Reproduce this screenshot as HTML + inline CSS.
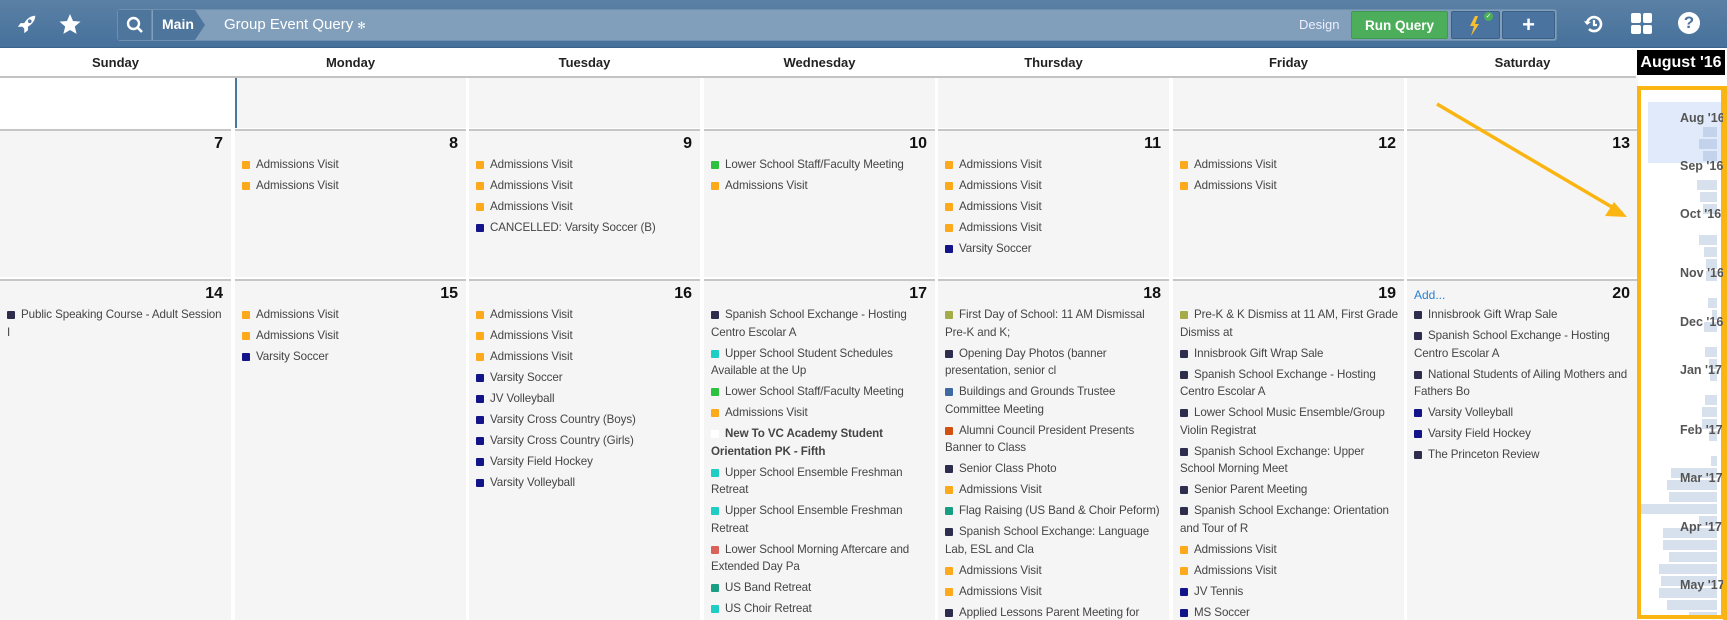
<!DOCTYPE html>
<html style="width:1727px;height:620px;overflow:hidden"><head><meta charset="utf-8"><style>
*{margin:0;padding:0;box-sizing:border-box}
body{width:1727px;height:620px;overflow:hidden;background:#fff;font-family:"Liberation Sans",sans-serif;position:relative}
.top{position:absolute;left:0;top:0;width:1727px;height:48px;background:linear-gradient(#5b80a5,#46719b);border-bottom:1px solid #3b6288}
.crumb{position:absolute;left:117px;top:9px;width:1440px;height:32px;background:#819fbb;border:1px solid #6f8fae;border-radius:3px}
.hd{position:absolute;top:48px;height:29px;font-weight:bold;font-size:13px;color:#222;text-align:center;line-height:29px}
.hline{position:absolute;left:0;top:76px;width:1636px;height:2px;background:#c3c3c3}
.cell{position:absolute;width:231px;background:#f5f5f5;border-top:2px solid #c6c6c6;overflow:hidden}
.num{position:absolute;right:8px;top:4px;font-weight:bold;font-size:16px;color:#111}
.ev{position:absolute;left:7px;top:25px;right:4px;font-size:11.6px;letter-spacing:-0.1px;color:#454545;line-height:17.5px}
.ev div{position:relative;margin-bottom:3.5px;text-indent:14px}
.ev div:before{content:"";position:absolute;left:0;top:5px;width:8px;height:8px;background:var(--c);border-radius:1px}
.ev div{--c:#2f2d4d}
.o{--c:#fcaa1c!important}.n{--c:#131489!important}.g{--c:#2dc23e!important}.t{--c:#1ecdc3!important}
.ol{--c:#a5ac47!important}.s{--c:#3e6aa1!important}.r{--c:#d2500f!important}.tg{--c:#189f83!important}.sa{--c:#d9625a!important}.w{--c:#fff!important}
.bar{position:absolute;height:10px;background:#d7e1ee;right:4px}
.ml{position:absolute;left:1680px;font-size:12.5px;font-weight:bold;color:#555;white-space:nowrap}
</style></head><body>
<div class="top">
<svg style="position:absolute;left:16px;top:13px" width="22" height="22" viewBox="0 0 24 24"><path d="M21 3c-5 0-9 3-12 8l-4 0-3 4 5 0 2 2 0 5 4-3 0-4c5-3 8-7 8-12z" fill="#fff"/><circle cx="15" cy="9" r="2" fill="#5579a0"/></svg>
<svg style="position:absolute;left:58px;top:12px" width="24" height="24" viewBox="0 0 24 24"><path d="M12 2l3 7 7.5.6-5.7 4.9 1.8 7.4L12 18l-6.6 3.9 1.8-7.4L1.5 9.6 9 9z" fill="#fff"/></svg>
<div class="crumb">
<div style="position:absolute;left:0;top:0;width:34px;height:30px;background:#4e759c;border-right:1px solid #6c8cab"></div>
<svg style="position:absolute;left:8px;top:6px" width="18" height="18" viewBox="0 0 18 18"><circle cx="7.5" cy="7.5" r="5.5" fill="none" stroke="#fff" stroke-width="2.4"/><path d="M11.5 11.5l4.5 4.5" stroke="#fff" stroke-width="2.6"/></svg>
<svg style="position:absolute;left:35px;top:0" width="52" height="30"><path d="M0 0h42l10 15-10 15H0z" fill="#4e759c"/></svg>
<div style="position:absolute;left:44px;top:6px;color:#fff;font-weight:bold;font-size:14px">Main</div>
<div style="position:absolute;left:106px;top:6px;color:#fff;font-size:15px">Group Event Query <span style="font-size:10px">✻</span></div>
<div style="position:absolute;left:1181px;top:7px;color:#eef;font-size:13px">Design</div>
<div style="position:absolute;left:1233px;top:1px;width:97px;height:28px;background:#4cae5a;border:1px solid #3e9a4c;border-radius:2px;color:#fff;font-weight:bold;font-size:13.5px;text-align:center;line-height:27px">Run Query</div>
<div style="position:absolute;left:1333px;top:1px;width:49px;height:28px;background:#4a73a0;border:1px solid #3b6088;border-radius:2px"></div>
<svg style="position:absolute;left:1350px;top:6px" width="12" height="20" viewBox="0 0 12 20"><path d="M7 0L2 10h4L3 20l8-12H7l3-8z" fill="#f5c030"/></svg>
<div style="position:absolute;left:1366px;top:2px;width:9px;height:9px;border-radius:50%;background:#4cae5a;color:#fff;font-size:7px;line-height:9px;text-align:center">✓</div>
<div style="position:absolute;left:1384px;top:1px;width:53px;height:28px;background:#4a73a0;border:1px solid #3b6088;border-radius:2px;color:#fff;font-size:22px;font-weight:bold;text-align:center;line-height:26px">+</div>
</div>
<svg style="position:absolute;left:1583px;top:13px" width="22" height="22" viewBox="0 0 22 22"><path d="M4 11a7 7 0 1 1 2 5" fill="none" stroke="#fff" stroke-width="2.6"/><path d="M1 8l3 4 4-3z" fill="#fff"/><path d="M11 7v5h3" fill="none" stroke="#fff" stroke-width="2.2"/></svg>
<div style="position:absolute;left:1631px;top:13px;width:21px;height:21px">
<div style="position:absolute;left:0;top:0;width:9.5px;height:9.5px;background:#fff;border-radius:2px"></div><div style="position:absolute;left:11.5px;top:0;width:9.5px;height:9.5px;background:#fff;border-radius:2px"></div><div style="position:absolute;left:0;top:11.5px;width:9.5px;height:9.5px;background:#fff;border-radius:2px"></div><div style="position:absolute;left:11.5px;top:11.5px;width:9.5px;height:9.5px;background:#fff;border-radius:2px"></div></div>
<div style="position:absolute;left:1678px;top:12px;width:22px;height:22px;border-radius:50%;background:#fff;color:#4a73a0;font-weight:bold;font-size:17px;text-align:center;line-height:22px">?</div>
</div>

<div class="hd" style="left:0;width:231px">Sunday</div>
<div class="hd" style="left:235px;width:231px">Monday</div>
<div class="hd" style="left:469px;width:231px">Tuesday</div>
<div class="hd" style="left:704px;width:231px">Wednesday</div>
<div class="hd" style="left:938px;width:231px">Thursday</div>
<div class="hd" style="left:1173px;width:231px">Friday</div>
<div class="hd" style="left:1407px;width:231px">Saturday</div>
<div class="hline"></div>
<div style="position:absolute;left:1637px;top:50px;width:88px;height:25px;background:#000;color:#fff;font-weight:bold;font-size:16px;line-height:25px;text-align:center">August '16</div>

<div class="cell" style="left:0;top:78px;height:50px;background:#fff;border-top:0"></div>
<div class="cell" style="left:235px;top:78px;height:50px;border-top:0;border-left:2px solid #4e759c"></div>
<div class="cell" style="left:469px;top:78px;height:50px;border-top:0"></div>
<div class="cell" style="left:704px;top:78px;height:50px;border-top:0"></div>
<div class="cell" style="left:938px;top:78px;height:50px;border-top:0"></div>
<div class="cell" style="left:1173px;top:78px;height:50px;border-top:0"></div>
<div class="cell" style="left:1407px;top:78px;height:50px;border-top:0"></div>

<div class="cell" style="left:0;top:129px;height:148px"><div class="num">7</div></div>
<div class="cell" style="left:235px;top:129px;height:148px"><div class="num">8</div><div class="ev"><div class="o">Admissions Visit</div><div class="o">Admissions Visit</div></div></div>
<div class="cell" style="left:469px;top:129px;height:148px"><div class="num">9</div><div class="ev"><div class="o">Admissions Visit</div><div class="o">Admissions Visit</div><div class="o">Admissions Visit</div><div class="n">CANCELLED: Varsity Soccer (B)</div></div></div>
<div class="cell" style="left:704px;top:129px;height:148px"><div class="num">10</div><div class="ev"><div class="g">Lower School Staff/Faculty Meeting</div><div class="o">Admissions Visit</div></div></div>
<div class="cell" style="left:938px;top:129px;height:148px"><div class="num">11</div><div class="ev"><div class="o">Admissions Visit</div><div class="o">Admissions Visit</div><div class="o">Admissions Visit</div><div class="o">Admissions Visit</div><div class="n">Varsity Soccer</div></div></div>
<div class="cell" style="left:1173px;top:129px;height:148px"><div class="num">12</div><div class="ev"><div class="o">Admissions Visit</div><div class="o">Admissions Visit</div></div></div>
<div class="cell" style="left:1407px;top:129px;height:148px"><div class="num">13</div></div>

<div class="cell" style="left:0;top:279px;height:341px"><div class="num">14</div><div class="ev"><div>Public Speaking Course - Adult Session I</div></div></div>
<div class="cell" style="left:235px;top:279px;height:341px"><div class="num">15</div><div class="ev"><div class="o">Admissions Visit</div><div class="o">Admissions Visit</div><div class="n">Varsity Soccer</div></div></div>
<div class="cell" style="left:469px;top:279px;height:341px"><div class="num">16</div><div class="ev"><div class="o">Admissions Visit</div><div class="o">Admissions Visit</div><div class="o">Admissions Visit</div><div class="n">Varsity Soccer</div><div class="n">JV Volleyball</div><div class="n">Varsity Cross Country (Boys)</div><div class="n">Varsity Cross Country (Girls)</div><div class="n">Varsity Field Hockey</div><div class="n">Varsity Volleyball</div></div></div>
<div class="cell" style="left:704px;top:279px;height:341px"><div class="num">17</div><div class="ev"><div>Spanish School Exchange - Hosting Centro Escolar A</div><div class="t">Upper School Student Schedules Available at the Up</div><div class="g">Lower School Staff/Faculty Meeting</div><div class="o">Admissions Visit</div><div class="w" style="font-weight:bold">New To VC Academy Student Orientation PK - Fifth</div><div class="t">Upper School Ensemble Freshman Retreat</div><div class="t">Upper School Ensemble Freshman Retreat</div><div class="sa">Lower School Morning Aftercare and Extended Day Pa</div><div class="tg">US Band Retreat</div><div class="t">US Choir Retreat</div><div>Wind Orchestra &amp; Jazz Auditions</div></div></div>
<div class="cell" style="left:938px;top:279px;height:341px"><div class="num">18</div><div class="ev"><div class="ol">First Day of School: 11 AM Dismissal Pre-K and K;</div><div>Opening Day Photos (banner presentation, senior cl</div><div class="s">Buildings and Grounds Trustee Committee Meeting</div><div class="r">Alumni Council President Presents Banner to Class</div><div>Senior Class Photo</div><div class="o">Admissions Visit</div><div class="tg">Flag Raising (US Band &amp; Choir Peform)</div><div>Spanish School Exchange: Language Lab, ESL and Cla</div><div class="o">Admissions Visit</div><div class="o">Admissions Visit</div><div>Applied Lessons Parent Meeting for Parents New to</div></div></div>
<div class="cell" style="left:1173px;top:279px;height:341px"><div class="num">19</div><div class="ev"><div class="ol">Pre-K &amp; K Dismiss at 11 AM, First Grade Dismiss at</div><div>Innisbrook Gift Wrap Sale</div><div>Spanish School Exchange - Hosting Centro Escolar A</div><div>Lower School Music Ensemble/Group Violin Registrat</div><div>Spanish School Exchange: Upper School Morning Meet</div><div>Senior Parent Meeting</div><div>Spanish School Exchange: Orientation and Tour of R</div><div class="o">Admissions Visit</div><div class="o">Admissions Visit</div><div class="n">JV Tennis</div><div class="n">MS Soccer</div></div></div>
<div class="cell" style="left:1407px;top:279px;height:341px"><div class="num">20</div><div style="position:absolute;left:7px;top:7px;font-size:12px;color:#2a7fd4">Add...</div><div class="ev"><div>Innisbrook Gift Wrap Sale</div><div>Spanish School Exchange - Hosting Centro Escolar A</div><div>National Students of Ailing Mothers and Fathers Bo</div><div class="n">Varsity Volleyball</div><div class="n">Varsity Field Hockey</div><div>The Princeton Review</div></div></div>

<div style="position:absolute;left:1637px;top:86px;width:88px;height:533px;border:4px solid #fbb512;background:#fff;overflow:hidden">
<div style="position:absolute;left:7px;top:12px;width:80px;height:61px;background:#e1eafa"></div>
<div class="bar" style="top:37px;width:14px;background:#c3d3ec"></div>
<div class="bar" style="top:49px;width:18px;background:#c3d3ec"></div>
<div class="bar" style="top:61px;width:14px;background:#c3d3ec"></div>
<div class="bar" style="top:90px;width:20px"></div><div class="bar" style="top:102px;width:17px"></div><div class="bar" style="top:114px;width:14px"></div>
<div class="bar" style="top:145px;width:18px"></div><div class="bar" style="top:157px;width:13px"></div><div class="bar" style="top:169px;width:11px"></div><div class="bar" style="top:181px;width:11px"></div>
<div class="bar" style="top:208px;width:9px"></div><div class="bar" style="top:220px;width:5px"></div><div class="bar" style="top:232px;width:13px"></div>
<div class="bar" style="top:257px;width:12px"></div><div class="bar" style="top:269px;width:8px"></div><div class="bar" style="top:281px;width:7px"></div>
<div class="bar" style="top:305px;width:12px"></div><div class="bar" style="top:317px;width:15px"></div><div class="bar" style="top:329px;width:15px"></div><div class="bar" style="top:341px;width:8px"></div>
<div class="bar" style="top:366px;width:6px"></div><div class="bar" style="top:378px;width:46px"></div><div class="bar" style="top:390px;width:50px"></div><div class="bar" style="top:402px;width:48px"></div>
<div class="bar" style="top:414px;width:76px"></div><div class="bar" style="top:426px;width:18px"></div><div class="bar" style="top:438px;width:54px"></div><div class="bar" style="top:450px;width:54px"></div>
<div class="bar" style="top:462px;width:48px"></div><div class="bar" style="top:474px;width:58px"></div><div class="bar" style="top:486px;width:56px"></div><div class="bar" style="top:498px;width:58px"></div><div class="bar" style="top:510px;width:50px"></div><div class="bar" style="top:522px;width:28px"></div>
</div>
<div class="ml" style="top:111px">Aug '16</div><div class="ml" style="top:159px">Sep '16</div><div class="ml" style="top:207px">Oct '16</div><div class="ml" style="top:266px">Nov '16</div><div class="ml" style="top:315px">Dec '16</div><div class="ml" style="top:363px">Jan '17</div><div class="ml" style="top:423px">Feb '17</div><div class="ml" style="top:471px">Mar '17</div><div class="ml" style="top:520px">Apr '17</div><div class="ml" style="top:578px">May '17</div>
<div style="position:absolute;left:1723px;top:86px;width:4px;height:534px;background:#fbb512"></div>

<svg style="position:absolute;left:0;top:0" width="1727" height="620"><path d="M1437 104L1622 213" stroke="#fbb512" stroke-width="3.5"/><path d="M1627 217L1605 216L1614 202z" fill="#fbb512"/></svg>
</body></html>
